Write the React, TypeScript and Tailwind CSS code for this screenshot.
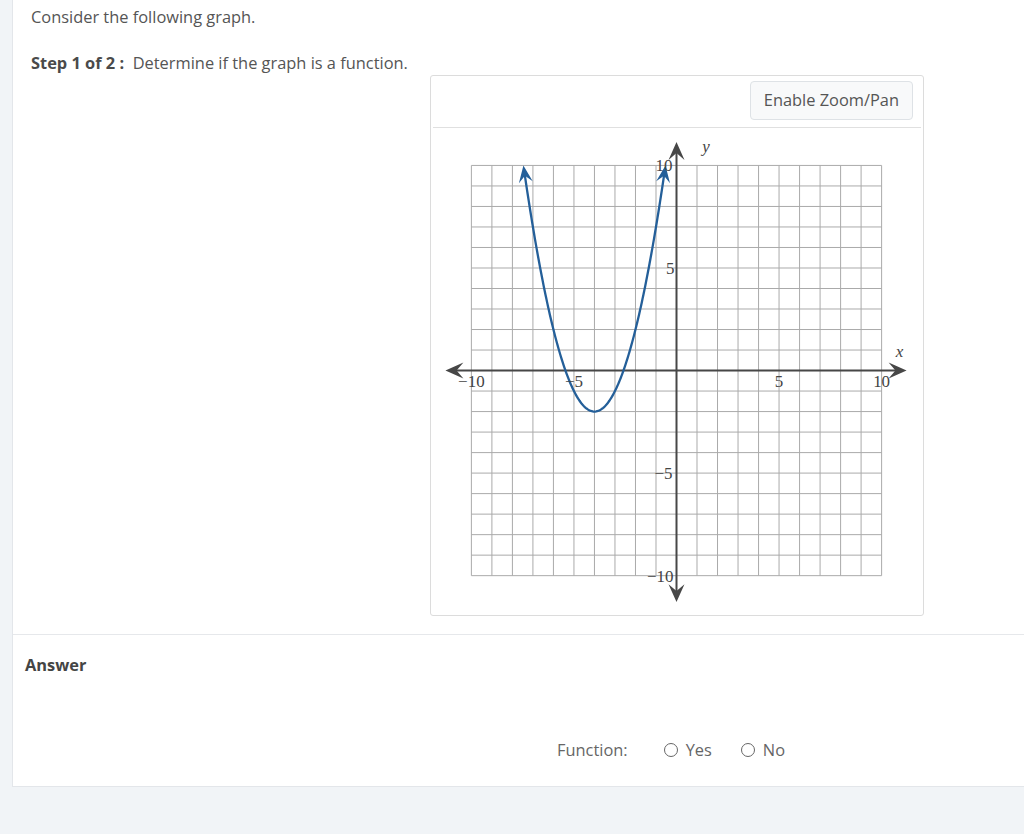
import React from "react";

const U = 20.55;
const OX = 245.5;
const OY = 243;
const X = (x: number) => OX + x * U;
const Y = (y: number) => OY - y * U;

function arrowHead(tx: number, ty: number, ang: number, L: number, W: number, cls: string) {
  const c = Math.cos(ang);
  const s = Math.sin(ang);
  const pt = (a: number, b: number) => `${(tx + a * c - b * s).toFixed(2)},${(ty + a * s + b * c).toFixed(2)}`;
  const d = `M${pt(0, 0)} L${pt(-L, W / 2)} L${pt(-L * 0.62, 0)} L${pt(-L, -W / 2)} Z`;
  return <path d={d} className={cls} />;
}

function Graph() {
  const f = (x: number) => (x + 4) * (x + 4) - 2;
  const x0 = -4 - Math.sqrt(12);
  const x1 = -4 + Math.sqrt(12);
  const pts: string[] = [];
  const N = 160;
  const inset = 0.05;
  for (let i = 0; i <= N; i++) {
    const x = x0 + inset + ((x1 - x0 - 2 * inset) * i) / N;
    pts.push(`${X(x).toFixed(2)},${Y(f(x)).toFixed(2)}`);
  }
  const slopeL = 2 * (x0 + 4);
  const aL = Math.atan2(slopeL * U, -U);
  const slopeR = 2 * (x1 + 4);
  const aR = Math.atan2(-slopeR * U, U);
  const ticks = Array.from({ length: 21 }, (_, k) => k - 10);
  const labelCls = "fill-[#444] text-[17px] font-['Liberation_Serif','DejaVu_Serif',serif]";
  const axisLabelCls = "fill-[#444] text-[17px] italic font-['Liberation_Serif','DejaVu_Serif',serif]";
  return (
    <svg width={494} height={488} viewBox="0 0 494 488" className="block">
      {ticks.map((i) => (
        <line key={"v" + i} x1={X(i)} y1={Y(10)} x2={X(i)} y2={Y(-10)} className="stroke-[#aaaaaa]" strokeWidth={1} />
      ))}
      {ticks.map((i) => (
        <line key={"h" + i} x1={X(-10)} y1={Y(i)} x2={X(10)} y2={Y(i)} className="stroke-[#aaaaaa]" strokeWidth={1} />
      ))}
      <line x1={24} y1={OY} x2={466} y2={OY} className="stroke-[#474747]" strokeWidth={2} />
      <line x1={OX} y1={24} x2={OX} y2={465} className="stroke-[#474747]" strokeWidth={2} />
      {arrowHead(476, OY, 0, 18, 16, "fill-[#474747]")}
      {arrowHead(14, OY, Math.PI, 18, 16, "fill-[#474747]")}
      {arrowHead(OX, 14, -Math.PI / 2, 18, 16, "fill-[#474747]")}
      {arrowHead(OX, 475, Math.PI / 2, 18, 16, "fill-[#474747]")}
      <polyline points={pts.join(" ")} fill="none" className="stroke-[#245f99]" strokeWidth={2.3} />
      {arrowHead(X(x0), Y(10), aL, 17, 14, "fill-[#245f99]")}
      {arrowHead(X(x1), Y(10), aR, 17, 14, "fill-[#245f99]")}
      <text x={X(-10)} y={OY + 16} textAnchor="middle" className={labelCls}>−10</text>
      <text x={X(-5)} y={OY + 16} textAnchor="middle" className={labelCls}>−5</text>
      <text x={X(5)} y={OY + 16} textAnchor="middle" className={labelCls}>5</text>
      <text x={X(10)} y={OY + 16} textAnchor="middle" className={labelCls}>10</text>
      <text x={OX - 4} y={Y(10) + 6} textAnchor="end" className={labelCls}>10</text>
      <text x={OX - 2} y={Y(5) + 6} textAnchor="end" className={labelCls}>5</text>
      <text x={OX - 4} y={Y(-5) + 6} textAnchor="end" className={labelCls}>−5</text>
      <text x={OX - 3} y={Y(-10) + 6} textAnchor="end" className={labelCls}>−10</text>
      <text x={469} y={229} textAnchor="middle" className={axisLabelCls}>x</text>
      <text x={275} y={24} textAnchor="middle" className={axisLabelCls}>y</text>
    </svg>
  );
}

function Radio({ label }: { label: string }) {
  return (
    <label className="flex items-center gap-[8px]">
      <span className="inline-block w-[14px] h-[14px] rounded-full border border-[#666] bg-white" />
      <span>{label}</span>
    </label>
  );
}

export default function App() {
  return (
    <div className="min-h-[834px] w-[1024px] bg-[#f1f4f7] flex flex-col text-[#555] font-['Open_Sans','Noto_Sans',sans-serif]">
      <div className="ml-[12px] bg-white border-l border-b border-[#e3e6ea]">
        <div className="pl-[18px] pt-[5px] pb-[18px]">
          <p className="text-[16.4px] leading-[24px]">Consider the following graph.</p>
          <p className="text-[16.4px] leading-[24px] mt-[22px]">
            <span className="font-bold text-[#4a4a4a]">Step 1 of 2 :</span>&nbsp; Determine if the graph is a function.
          </p>
          <div className="ml-[399px] mt-[0px] w-[494px] h-[541px] border border-[#dcdcdc] rounded-[3px] flex flex-col">
            <div className="h-[52px] mx-[2px] border-b border-[#e0e0e0] flex justify-end items-start pt-[5px] pr-[8px]">
              <button className="h-[39px] px-[13px] bg-[#f8f9fa] border border-[#dee2e6] rounded-[4px] text-[16.4px] text-[#555]">
                Enable Zoom/Pan
              </button>
            </div>
            <Graph />
          </div>
        </div>
        <div className="border-t border-[#e6e8eb] h-[152px] pl-[12px] pt-[18px]">
          <p className="text-[16.4px] font-bold text-[#444] leading-[24px]">Answer</p>
          <div className="flex items-center ml-[532px] mt-[61px] text-[16.4px] text-[#666] leading-[24px]">
            <span className="mr-[36px]">Function:</span>
            <div className="flex items-center gap-[29px]">
              <Radio label="Yes" />
              <Radio label="No" />
            </div>
          </div>
        </div>
      </div>
      <div className="flex-1" />
    </div>
  );
}
